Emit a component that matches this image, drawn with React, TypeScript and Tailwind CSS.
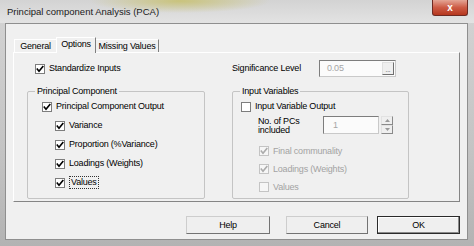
import React from 'react';

function Check({ checked = false, disabled = false }: { checked?: boolean; disabled?: boolean }) {
  return (
    <span
      className={`flex h-[10px] w-[10px] shrink-0 items-center justify-center border ${
        disabled ? 'border-[#c4c4c4] bg-[#f6f6f6]' : 'border-[#7d7d7d] bg-white'
      }`}
    >
      {checked && (
        <svg width="8" height="8" viewBox="0 0 8 8">
          <path
            d="M0.8 3.6 L3 6.3 L7.3 0.9"
            fill="none"
            stroke={disabled ? '#ababab' : '#000'}
            strokeWidth="1.6"
          />
        </svg>
      )}
    </span>
  );
}

interface CheckRowProps {
  label: string;
  checked?: boolean;
  disabled?: boolean;
  focused?: boolean;
  className?: string;
}

function CheckRow({ label, checked, disabled, focused, className = '' }: CheckRowProps) {
  return (
    <div className={`flex items-center gap-[4px] ${className}`}>
      <Check checked={checked} disabled={disabled} />
      <span
        className={`${disabled ? 'text-[#a3a3a3]' : 'text-black'} ${
          focused ? 'border border-dotted border-[#333] px-[1px]' : ''
        }`}
      >
        {label}
      </span>
    </div>
  );
}

function Button({ label, isDefault = false, className = '' }: { label: string; isDefault?: boolean; className?: string }) {
  return (
    <div
      className={`flex h-[18px] items-center justify-center bg-[#efefef] ${
        isDefault
          ? 'border border-[#2b2b2b] shadow-[inset_-1px_-1px_0_#8a8a8a,inset_1px_1px_0_#fff]'
          : 'border border-t-[#cdcdcd] border-l-[#cdcdcd] border-r-[#737373] border-b-[#737373]'
      } ${className}`}
    >
      {label}
    </div>
  );
}

export default function App() {
  return (
    <div className="relative h-[246px] w-[474px] overflow-hidden bg-[linear-gradient(to_bottom,#d4d4d4,#c4c4c4_60%,#b3b3b3)] font-['Liberation_Sans',Arial,sans-serif] text-[9px] leading-[11px] tracking-[-0.2px] text-black">
      {/* Title bar */}
      <div className="flex h-[23px] items-start justify-between bg-[radial-gradient(ellipse_90px_12px_at_180px_1px,#c9c37c,transparent),linear-gradient(to_bottom,#d3d3d3,#e3e3e3)] pl-[7px] pr-[6px]">
        <span className="mt-[6px] text-[9.5px] tracking-normal text-[#1a1a1a]">
          Principal component Analysis (PCA)
        </span>
        <div className="flex h-[16px] w-[36px] items-center justify-center rounded-b-[3px] border border-t-0 border-[#6e2a22] bg-[linear-gradient(to_bottom,#e4a595,#cd5b45_50%,#b5371e)]">
          <span className="text-[10px] font-bold leading-none tracking-normal text-white">x</span>
        </div>
      </div>

      {/* Client area */}
      <div className="ml-[5px] h-[217px] w-[463px] border border-[#8f8f8f] bg-[#f0f0f0] px-[7px]">
        {/* Tabs */}
        <div className="mt-[13px] flex h-[15px] items-end pl-[1px]">
          <div className="flex h-[13px] w-[42px] items-center justify-center border-l border-t border-white">
            General
          </div>
          <div className="relative z-10 -mb-[1px] flex h-[16px] w-[40px] items-center justify-center border-l border-r border-t border-l-white border-t-white border-r-[#7f7f7f] bg-[#f0f0f0] pb-[2px]">
            Options
          </div>
          <div className="flex h-[13px] w-[63px] items-center justify-center border-r border-t border-t-white border-r-[#7f7f7f]">
            Missing Values
          </div>
        </div>

        {/* Tab panel */}
        <div className="h-[150px] w-[447px] border border-b-[#858585] border-l-white border-r-[#858585] border-t-white pl-[13px] pt-[7px]">
          {/* Row 1 */}
          <div className="flex h-[17px]">
            <div className="flex w-[205px] items-center pl-[8px]">
              <CheckRow label="Standardize Inputs" checked />
            </div>
            <div className="flex items-center">
              <span className="w-[87px]">Significance Level</span>
              <div className="flex h-[17px] w-[77px] items-center justify-between border border-b-[#c9c9c9] border-l-[#7d7d7d] border-r-[#c9c9c9] border-t-[#7d7d7d] bg-[#fbfbfb] pl-[7px] pr-[1px]">
                <span className="text-[#a6a6a6]">0.05</span>
                <div className="flex h-[13px] w-[12px] items-end justify-center border border-b-[#6f6f6f] border-l-[#e0e0e0] border-r-[#6f6f6f] border-t-[#e0e0e0] bg-[#efefef] pb-[1px] text-[6px] leading-[6px] tracking-normal">
                  ...
                </div>
              </div>
            </div>
          </div>

          {/* Groups */}
          <div className="mt-[9px] flex">
            <fieldset className="h-[113px] w-[178px] rounded-[2px] border border-[#c4c4c4]">
              <legend className="ml-[7px] px-[2px] leading-[11px]">Principal Component</legend>
              <div className="pl-[14px]">
                <CheckRow label="Principal Component Output" checked className="h-[19px]" />
                <div className="pl-[13px]">
                  <CheckRow label="Variance" checked className="h-[19px]" />
                  <CheckRow label="Proportion (%Variance)" checked className="h-[19px]" />
                  <CheckRow label="Loadings (Weights)" checked className="h-[19px]" />
                  <CheckRow label="Values" checked focused className="h-[19px]" />
                </div>
              </div>
            </fieldset>

            <fieldset className="ml-[27px] h-[113px] w-[177px] rounded-[2px] border border-[#c4c4c4]">
              <legend className="ml-[7px] px-[2px] leading-[11px]">Input Variables</legend>
              <div className="pl-[8px]">
                <CheckRow label="Input Variable Output" className="h-[19px]" />
                <div className="flex h-[26px] items-start pl-[17px]">
                  <div className="mt-[1px] w-[65px] leading-[9px]">
                    No. of PCs
                    <br />
                    included
                  </div>
                  <div className="flex h-[18px] w-[56px] items-center border border-b-[#c9c9c9] border-l-[#7d7d7d] border-r-[#c9c9c9] border-t-[#7d7d7d] bg-[#fbfbfb] pl-[9px] text-[#a6a6a6]">
                    1
                  </div>
                  <div className="ml-[2px] flex h-[18px] w-[12px] flex-col">
                    <div className="flex h-[9px] items-center justify-center border border-b-[#8a8a8a] border-l-[#e2e2e2] border-r-[#8a8a8a] border-t-[#e2e2e2] bg-[#efefef]">
                      <svg width="5" height="3" viewBox="0 0 5 3">
                        <path d="M0 3 L2.5 0 L5 3 Z" fill="#9a9a9a" />
                      </svg>
                    </div>
                    <div className="flex h-[9px] items-center justify-center border border-b-[#8a8a8a] border-l-[#e2e2e2] border-r-[#8a8a8a] border-t-[#e2e2e2] bg-[#efefef]">
                      <svg width="5" height="3" viewBox="0 0 5 3">
                        <path d="M0 0 L2.5 3 L5 0 Z" fill="#9a9a9a" />
                      </svg>
                    </div>
                  </div>
                </div>
                <div className="pl-[18px]">
                  <CheckRow label="Final communality" checked disabled className="h-[18px]" />
                  <CheckRow label="Loadings (Weights)" checked disabled className="h-[18px]" />
                  <CheckRow label="Values" disabled className="h-[18px]" />
                </div>
              </div>
            </fieldset>
          </div>
        </div>

        {/* Buttons */}
        <div className="mt-[14px] flex w-[447px] justify-end">
          <Button label="Help" className="mr-[16px] w-[84px]" />
          <Button label="Cancel" className="mr-[9px] w-[82px]" />
          <Button label="OK" isDefault className="w-[83px]" />
        </div>
      </div>
    </div>
  );
}
